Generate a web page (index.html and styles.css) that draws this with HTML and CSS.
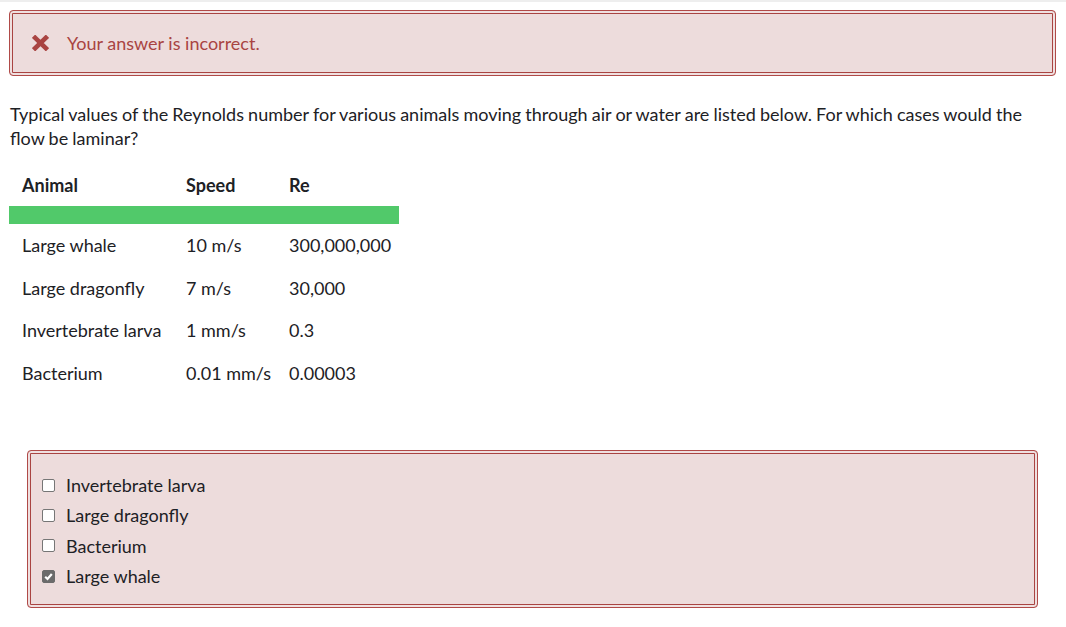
FILE: index.html
```html
<!DOCTYPE html>
<html>
<head>
<meta charset="utf-8">
<link rel="stylesheet" href="styles.css">
</head>
<body>
<div class="topband"></div>
<div class="page">
  <div class="feedback">
    <svg class="xicon" width="17" height="16" viewBox="0 0 17 16"><path d="M3.2 2.8 L13.8 13.2 M13.8 2.8 L3.2 13.2" stroke="#a94442" stroke-width="4.6" stroke-linecap="square"/></svg>
    <span class="feedback-text">Your answer is incorrect.</span>
  </div>
  <p class="qtext">Typical values of the Reynolds number for various animals moving through air or water are listed below. For which cases would the flow be laminar?</p>
  <table class="data">
    <colgroup><col class="c1"><col class="c2"><col class="c3"></colgroup>
    <tr class="head"><th>Animal</th><th>Speed</th><th>Re</th></tr>
    <tr class="bar"><td></td><td></td><td></td></tr>
    <tr><td>Large whale</td><td>10 m/s</td><td>300,000,000</td></tr>
    <tr><td>Large dragonfly</td><td>7 m/s</td><td>30,000</td></tr>
    <tr><td>Invertebrate larva</td><td>1 mm/s</td><td>0.3</td></tr>
    <tr><td>Bacterium</td><td>0.01 mm/s</td><td>0.00003</td></tr>
  </table>
  <div class="answers">
    <label class="opt"><span class="box"></span><span>Invertebrate larva</span></label>
    <label class="opt"><span class="box"></span><span>Large dragonfly</span></label>
    <label class="opt"><span class="box"></span><span>Bacterium</span></label>
    <label class="opt"><span class="box checked"><svg width="11" height="11" viewBox="0 0 11 11"><path d="M2.2 5.8 L4.5 8 L8.8 3" fill="none" stroke="#ffffff" stroke-width="2.2"/></svg></span><span>Large whale</span></label>
  </div>
</div>
</body>
</html>
```
FILE: styles.css
```css
html, body {
  margin: 0;
  padding: 0;
  background: #ffffff;
}
body {
  font-family: Lato, "Open Sans", sans-serif;
  font-size: 18px;
  color: #1d2125;
}
.topband {
  height: 2px;
  background: #eeeeee;
}
.page {
  padding: 8px 10px 0 9px;
}
.feedback {
  box-sizing: border-box;
  width: 1047px;
  height: 66px;
  border: 1px solid #b04a48;
  border-radius: 4px;
  background: #eddcdc;
  box-shadow: inset 0 0 0 2px #efe0e0, inset 0 0 0 3px #a94442;
  display: flex;
  align-items: center;
  padding-left: 22px;
  padding-bottom: 1px;
}
.xicon {
  display: block;
  margin-right: 18px;
}
.feedback-text {
  color: #a94442;
  font-size: 18px;
}
.qtext {
  margin: 26px 0 14px 1px;
  line-height: 24px;
  font-size: 18px;
  word-spacing: -0.45px;
}
.data {
  border-collapse: collapse;
  table-layout: fixed;
  width: 390px;
}
.data col.c1 { width: 164px; }
.data col.c2 { width: 103px; }
.data col.c3 { width: 123px; }
.data th, .data td {
  text-align: left;
  padding: 0 0 0 13px;
  height: 42px;
  white-space: nowrap;
}
.data th {
  font-weight: 700;
}
.data tr.bar td {
  height: 18px;
  background: #51c96a;
}
.data tr:not(.head):not(.bar) td {
  height: 42.5px;
}
.answers {
  box-sizing: border-box;
  margin: 56px 0 0 18px;
  width: 1011px;
  height: 158px;
  border: 1px solid #b04a48;
  border-radius: 4px;
  background: #eddcdc;
  box-shadow: inset 0 0 0 2px #efe0e0, inset 0 0 0 3px #a94442;
  padding: 19px 12px 0 14px;
}
.opt {
  display: flex;
  align-items: center;
  height: 30.3px;
}
.box {
  box-sizing: border-box;
  width: 13px;
  height: 13px;
  border: 1px solid #767676;
  border-radius: 2px;
  background: #ffffff;
  margin-right: 11px;
  display: flex;
  align-items: center;
  justify-content: center;
}
.box.checked {
  background: #6b6b6b;
  border-color: #6b6b6b;
}
.box svg {
  display: block;
}
```
